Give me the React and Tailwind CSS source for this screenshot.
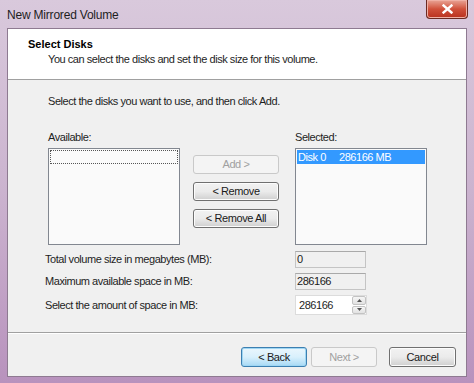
import React from "react";

const font = { fontFamily: '"Liberation Sans", Arial, sans-serif' };

const WinButton = ({ children, disabled, focused, className = "" }) => (
  <div
    className={
      "flex items-center justify-center rounded-[3px] border text-[11px] tracking-[-0.4px] " +
      (disabled
        ? "border-[#c9c9c9] bg-[#f4f4f4] text-[#a0a0a0] "
        : focused
        ? "border-[#3c7fb1] bg-gradient-to-b from-[#eaf6fd] via-[#d9f0fc] to-[#a7d9f5] text-[#1a1a1a] shadow-[inset_0_0_0_1px_#9fd6f3] "
        : "border-[#707070] bg-gradient-to-b from-[#f2f2f2] via-[#ebebeb] to-[#cfcfcf] text-[#1a1a1a] shadow-[inset_0_0_0_1px_#fcfcfc] ") +
      className
    }
  >
    {children}
  </div>
);

const Field = ({ value }) => (
  <div className="h-[17px] w-[71px] border border-[#c4c4c4] border-t-[#a9a9a9] bg-[#f0f0f0] pl-[1px] leading-[15px] text-[#1a1a1a]">
    {value}
  </div>
);

export default function App() {
  return (
    <div
      className="flex h-[383px] w-[474px] flex-col overflow-hidden bg-gradient-to-b from-[#d9c9dc] via-[#cbb3cf] to-[#b892bd] px-[7px] pb-[6px]"
      style={font}
    >
      <div className="flex h-[28px] shrink-0 items-start justify-between">
        <div className="pt-[6px] text-[12px] tracking-[-0.2px] text-[#1e1e1e]">New Mirrored Volume</div>
        <div className="-mr-[1px] flex h-[19px] w-[42px] items-center justify-center rounded-b-[4px] border border-t-0 border-[#6b2a22] bg-gradient-to-b from-[#e8a496] via-[#d0503a] to-[#b8311d] shadow-[inset_0_0_0_1px_#f0b0a4]">
          <svg width="11" height="10" viewBox="0 0 11 10">
            <path d="M1.5 1.5 L9.5 8.5 M9.5 1.5 L1.5 8.5" stroke="#fff" strokeWidth="2.4" strokeLinecap="square" />
          </svg>
        </div>
      </div>

      <div className="flex flex-1 flex-col border border-[#8e7a91] bg-[#f0f0f0] text-[11px] tracking-[-0.45px]">
        <div className="h-[51px] shrink-0 border-b border-[#a0a0a0] bg-white pl-[20px] pt-[8px]">
          <div className="text-[11px] font-bold leading-[14px] tracking-normal text-black">Select Disks</div>
          <div className="pl-[20px] pt-[1px] leading-[14px] text-[#1e1e1e]">
            You can select the disks and set the disk size for this volume.
          </div>
        </div>

        <div className="flex-1 pl-[40px] pr-[10px] text-[#1e1e1e]">
          <div className="pt-[14px] leading-[14px]">Select the disks you want to use, and then click Add.</div>

          <div className="mt-[22px] flex">
            <div className="w-[132px]">
              <div className="leading-[14px]">Available:</div>
              <div className="mt-[4px] h-[97px] border border-[#828790] bg-[#fafafa] p-[1px]">
                <div className="h-[14px] border border-dotted border-[#555]" />
              </div>
            </div>

            <div className="ml-[13px] flex w-[86px] flex-col gap-[8px] pt-[25px]">
              <WinButton disabled className="h-[19px]">Add &gt;</WinButton>
              <WinButton className="h-[19px]">&lt; Remove</WinButton>
              <WinButton className="h-[19px]">&lt; Remove All</WinButton>
            </div>

            <div className="ml-[16px] w-[132px]">
              <div className="leading-[14px]">Selected:</div>
              <div className="mt-[4px] h-[97px] border border-[#828790] bg-[#fafafa] p-[1px]">
                <div className="flex h-[14px] bg-[#3399ff] pl-[1px] leading-[14px] text-white">
                  <span className="w-[41px]">Disk 0</span>
                  <span>286166 MB</span>
                </div>
              </div>
            </div>
          </div>

          <div className="mt-[6px] flex flex-col gap-[5px]">
            <div className="-ml-[3px] flex items-center">
              <div className="w-[250px]">Total volume size in megabytes (MB):</div>
              <Field value="0" />
            </div>
            <div className="-ml-[3px] flex items-center">
              <div className="w-[250px]">Maximum available space in MB:</div>
              <Field value="286166" />
            </div>
            <div className="-ml-[3px] flex items-center">
              <div className="w-[250px]">Select the amount of space in MB:</div>
              <div className="flex h-[20px] w-[72px] items-center border border-[#dcdcdc] bg-white">
                <div className="flex-1 pl-[3px] leading-[14px]">286166</div>
                <div className="flex h-[18px] w-[14px] flex-col gap-[1px]">
                  <div className="flex flex-1 items-center justify-center rounded-[2px] border border-[#c3c3c3] bg-gradient-to-b from-[#f6f6f6] to-[#e2e2e2]">
                    <svg width="5" height="3" viewBox="0 0 5 3"><path d="M0 3 L2.5 0 L5 3 Z" fill="#555" /></svg>
                  </div>
                  <div className="flex flex-1 items-center justify-center rounded-[2px] border border-[#c3c3c3] bg-gradient-to-b from-[#f6f6f6] to-[#e2e2e2]">
                    <svg width="5" height="3" viewBox="0 0 5 3"><path d="M0 0 L2.5 3 L5 0 Z" fill="#555" /></svg>
                  </div>
                </div>
              </div>
            </div>
          </div>
        </div>

        <div className="h-[44px] shrink-0 border-t border-[#a0a0a0] shadow-[inset_0_1px_0_#ffffff]">
          <div className="flex justify-end pr-[10px] pt-[14px]">
            <WinButton focused className="h-[20px] w-[66px]">&lt; Back</WinButton>
            <WinButton disabled className="ml-[4px] h-[20px] w-[66px]">Next &gt;</WinButton>
            <WinButton className="ml-[12px] h-[20px] w-[67px]">Cancel</WinButton>
          </div>
        </div>
      </div>
    </div>
  );
}
